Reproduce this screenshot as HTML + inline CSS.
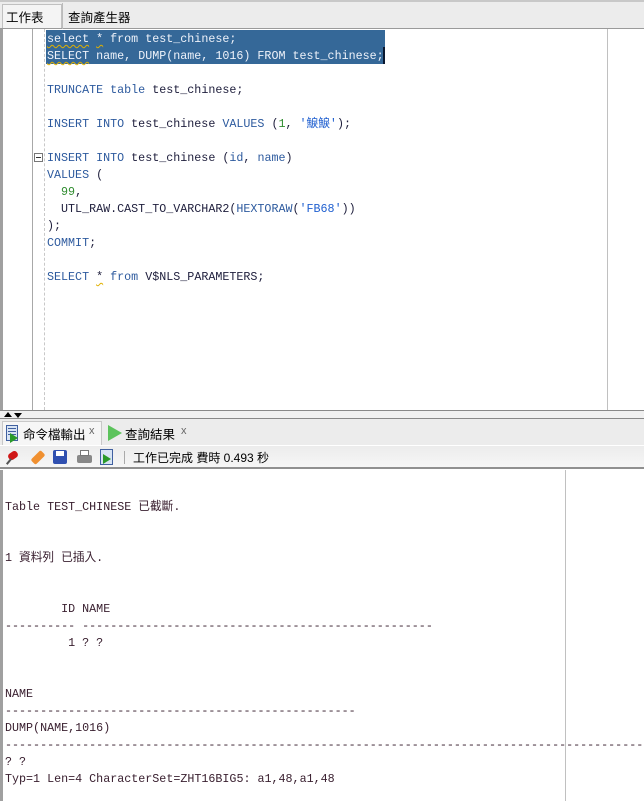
<!DOCTYPE html>
<html><head><meta charset="utf-8"><style>
*{margin:0;padding:0;box-sizing:border-box}
body{width:644px;height:801px;overflow:hidden;background:#fff;font-family:"Liberation Sans","Noto Sans CJK TC",sans-serif;position:relative}
.abs{position:absolute}
.mono{font-family:"Liberation Mono","Noto Sans CJK TC",monospace;font-size:11.7px;white-space:pre;line-height:17px}
.kw{color:#2d5a9e}
.id{color:#1e1e3c}
.num{color:#2e8b2e}
.str{color:#2060d0}
.wv{text-decoration:underline wavy #e0b000;text-decoration-thickness:1px;text-underline-offset:2px}
.sel{color:#eef2fa}
.out{color:#3a2030}
</style></head><body>
<div class="abs" style="left:0;top:0;width:644px;height:29px;background:#ececec;border-bottom:1px solid #9a9a9a"></div>
<div class="abs" style="left:0;top:0;width:644px;height:2px;background:#c8c8c8"></div>
<div class="abs" style="left:2px;top:4px;width:60px;height:24px;background:#f4f4f4;border:1px solid #c0c0c0;border-bottom:none"></div>
<div class="abs" style="left:6px;top:7px;font-size:12.5px;color:#000">工作表</div>
<div class="abs" style="left:62px;top:3px;width:1px;height:26px;background:#bbb"></div>
<div class="abs" style="left:68px;top:7px;font-size:12.5px;color:#000">查詢產生器</div>
<div class="abs" style="left:0;top:29px;width:3px;height:381px;background:#a0a0a0"></div>
<div class="abs" style="left:32px;top:29px;width:1px;height:381px;background:#a8a8a8"></div>
<div class="abs" style="left:44px;top:29px;height:381px;border-left:1px dashed #c8c8c8"></div>
<div class="abs" style="left:607px;top:29px;width:1px;height:381px;background:#c0c0c0"></div>
<div class="abs" style="left:46px;top:30px;width:339px;height:34px;background:#356898"></div>
<div class="abs" style="left:383px;top:47px;width:2px;height:17px;background:#0a1830"></div>
<div class="abs" style="left:34px;top:153px;width:9px;height:9px;border:1px solid #777;background:#fff"></div>
<div class="abs" style="left:36px;top:157px;width:5px;height:1px;background:#333"></div>
<div class="abs mono" style="left:47px;top:31px"><span class="sel"><span class="wv">select</span> <span class="wv">*</span> from test_chinese;
<span class="wv">SELECT</span> name, DUMP(name, 1016) FROM test_chinese;</span>

<span class="kw">TRUNCATE table</span> <span class="id">test_chinese;</span>

<span class="kw">INSERT INTO</span> <span class="id">test_chinese</span> <span class="kw">VALUES</span> <span class="id">(</span><span class="num">1</span><span class="id">,</span> <span class="str">'𩸭𩸭'</span><span class="id">);</span>

<span class="kw">INSERT INTO</span> <span class="id">test_chinese</span> <span class="id">(</span><span class="kw">id</span><span class="id">,</span> <span class="kw">name</span><span class="id">)</span>
<span class="kw">VALUES</span> <span class="id">(</span>
  <span class="num">99</span><span class="id">,</span>
  <span class="id">UTL_RAW.CAST_TO_VARCHAR2(</span><span class="kw">HEXTORAW</span><span class="id">(</span><span class="str">'FB68'</span><span class="id">))</span>
<span class="id">);</span>
<span class="kw">COMMIT</span><span class="id">;</span>

<span class="kw">SELECT</span> <span class="wv id">*</span> <span class="kw">from</span> <span class="id">V$NLS_PARAMETERS;</span></div>
<div class="abs" style="left:0;top:410px;width:644px;height:9px;background:#f0f0f0;border-top:1px solid #888;border-bottom:1px solid #888"></div>
<div class="abs" style="left:4px;top:412px;width:0;height:0;border-left:4px solid transparent;border-right:4px solid transparent;border-bottom:5px solid #000"></div>
<div class="abs" style="left:14px;top:413px;width:0;height:0;border-left:4px solid transparent;border-right:4px solid transparent;border-top:5px solid #000"></div>
<div class="abs" style="left:0;top:419px;width:644px;height:27px;background:#ececec;border-bottom:1px solid #fff"></div>
<div class="abs" style="left:2px;top:421px;width:100px;height:24px;background:#f6f6f6;border:1px solid #c8c8c8;border-bottom:none"></div>
<div class="abs" style="left:6px;top:425px;width:12px;height:16px;background:#d8e4f4;border:1px solid #4060a0"></div>
<div class="abs" style="left:8px;top:428px;width:8px;height:1px;background:#4060a0;box-shadow:0 3px 0 #4060a0,0 6px 0 #4060a0"></div>
<div class="abs" style="left:10px;top:433px;width:0;height:0;border-top:5px solid transparent;border-bottom:5px solid transparent;border-left:8px solid #2a9a2a"></div>
<div class="abs" style="left:23px;top:424px;font-size:12.5px">命令檔輸出</div>
<div class="abs" style="left:89px;top:425px;font-size:11px;color:#666">x</div>
<div class="abs" style="left:108px;top:425px;width:0;height:0;border-top:8px solid transparent;border-bottom:8px solid transparent;border-left:14px solid #5cc35c"></div>
<div class="abs" style="left:125px;top:424px;font-size:12.5px">查詢結果</div>
<div class="abs" style="left:181px;top:425px;font-size:11px;color:#666">x</div>
<div class="abs" style="left:0;top:446px;width:644px;height:23px;background:linear-gradient(#ececec,#f6f6f6);border-bottom:2px solid #909090"></div>
<div class="abs" style="left:8px;top:452px;width:10px;height:7px;background:#d01818;border-radius:3px;transform:rotate(-35deg)"></div>
<div class="abs" style="left:8px;top:458px;width:2px;height:7px;background:#555;transform:rotate(40deg)"></div>
<div class="abs" style="left:31px;top:454px;width:14px;height:7px;background:#f09030;border-radius:2px;transform:rotate(-45deg)"></div>
<div class="abs" style="left:53px;top:450px;width:14px;height:14px;background:#3050b0;border-radius:2px"></div>
<div class="abs" style="left:56px;top:451px;width:8px;height:5px;background:#fff"></div>
<div class="abs" style="left:77px;top:455px;width:15px;height:8px;background:#888;border-radius:2px"></div>
<div class="abs" style="left:80px;top:450px;width:9px;height:6px;background:#fff;border:1px solid #777"></div>
<div class="abs" style="left:100px;top:449px;width:13px;height:16px;background:#d8e4f4;border:1px solid #4060a0"></div>
<div class="abs" style="left:103px;top:454px;width:0;height:0;border-top:5px solid transparent;border-bottom:5px solid transparent;border-left:8px solid #2a9a2a"></div>
<div class="abs" style="left:124px;top:451px;width:1px;height:13px;background:#aaa"></div>
<div class="abs" style="left:133px;top:449px;font-size:12px">工作已完成 費時 0.493 秒</div>
<div class="abs" style="left:0;top:470px;width:3px;height:331px;background:#a0a0a0"></div>
<div class="abs" style="left:565px;top:470px;width:1px;height:331px;background:#c0c0c0"></div>
<div class="abs" style="left:3px;top:470px;width:641px;height:331px;overflow:hidden">
<div class="abs mono out" style="left:2px;top:29px">Table TEST_CHINESE 已截斷.


1 資料列 已插入.


        ID NAME
---------- --------------------------------------------------
         1 ? ?


NAME
--------------------------------------------------
DUMP(NAME,1016)
------------------------------------------------------------------------------------------------------------------------
? ?
Typ=1 Len=4 CharacterSet=ZHT16BIG5: a1,48,a1,48</div>
</div>
</body></html>
